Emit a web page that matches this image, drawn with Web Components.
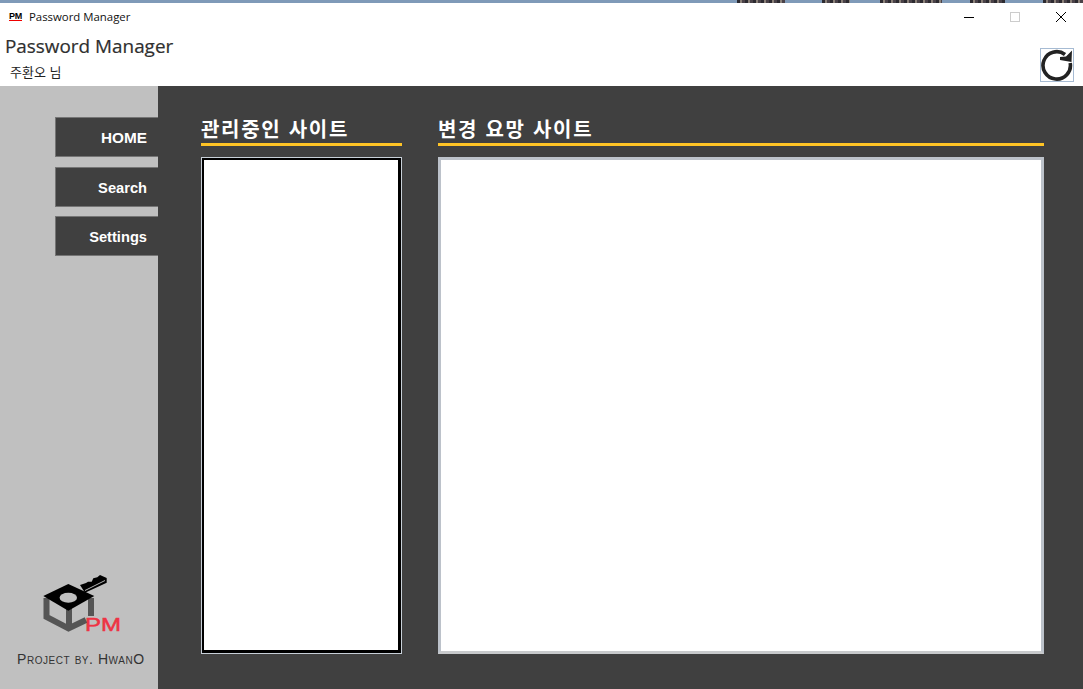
<!DOCTYPE html>
<html lang="ko">
<head>
<meta charset="utf-8">
<title>Password Manager</title>
<style>
  html, body { margin: 0; height: 100%; background: #404040; overflow: hidden; }
</style>
</head>
<body>
<pm-app></pm-app>
<script>
class DesktopStrip extends HTMLElement {
  connectedCallback() {
    this.attachShadow({ mode: "open" }).innerHTML = `
      <style>
        :host { display: flex; height: 3px; background: #7f9ab8; overflow: hidden; }
        i { display: block; height: 3px; background: repeating-linear-gradient(90deg, #2c2a30 0 3px, #8a8078 3px 5px, #4a4248 5px 8px); }
        .a { margin-left: 737px; width: 48px; }
        .b { margin-left: 37px; width: 28px; }
        .c { margin-left: 30px; width: 62px; }
        .d { margin-left: 28px; width: 35px; }
        .e { margin-left: 38px; width: 40px; }
      </style>
      <i class="a"></i><i class="b"></i><i class="c"></i><i class="d"></i><i class="e"></i>`;
  }
}

class TitleBar extends HTMLElement {
  connectedCallback() {
    this.attachShadow({ mode: "open" }).innerHTML = `
      <style>
        :host { display: flex; align-items: center; height: 28px; box-sizing: border-box; padding-bottom: 1px; background: #fff; color: #111; font: 11.4px "Open Sans", "Noto Sans", sans-serif; }
        .logo { margin-left: 9px; width: 13px; height: 8px; border-bottom: 1px solid #e00; font: bold 9px/8px "Liberation Sans", sans-serif; color: #000; letter-spacing: -.3px; }
        .name { margin-left: 7px; flex: 1; }
        .ctl { width: 46px; height: 27px; display: flex; align-items: center; justify-content: center; }
        .ctl:last-child { margin-right: -1px; }
        svg { display: block; }
      </style>
      <div class="logo">PM</div>
      <div class="name">Password Manager</div>
      <div class="ctl"><svg width="10" height="10"><path d="M0 5.5H10" stroke="#000"/></svg></div>
      <div class="ctl"><svg width="10" height="10"><rect x=".5" y=".5" width="9" height="9" fill="none" stroke="#ccc"/></svg></div>
      <div class="ctl"><svg width="10" height="10"><path d="M0 0L10 10M10 0L0 10" stroke="#000"/></svg></div>`;
  }
}

class AppHeader extends HTMLElement {
  connectedCallback() {
    this.attachShadow({ mode: "open" }).innerHTML = `
      <style>
        :host { display: flex; justify-content: space-between; height: 55px; background: #fff; }
        .left { padding-left: 5px; padding-top: 2px; }
        h1 { margin: 0; font: 400 18.9px/26px "Open Sans", "Noto Sans", sans-serif; color: #2f2f2f; -webkit-text-stroke: .2px #2f2f2f; }
        p { margin: 4px 0 0 5px; font: 13px/18px "Noto Sans CJK KR", sans-serif; color: #222; }
        button { margin: 17px 9px 0 0; width: 34px; height: 34px; padding: 0; background: #fff; border: 1px solid #a6bbd3; display: flex; align-items: center; justify-content: center; }
        svg { display: block; flex: none; }
      </style>
      <div class="left">
        <h1>Password Manager</h1>
        <p>주환오 님</p>
      </div>
      <button>
        <svg width="32" height="32" viewBox="0 0 32 32">
          <path d="M29.2 14A13.7 13.7 0 1 1 24 5.500" fill="none" stroke="#222" stroke-width="3.6"/>
          <path d="M31 1.500L30.500 13L19 11L19 8L25 7.500Z" fill="#222"/>
        </svg>
      </button>`;
  }
}

class NavButton extends HTMLElement {
  connectedCallback() {
    const margin = this.getAttribute("gap") || "0";
    const size = this.getAttribute("size") || "14.67";
    this.attachShadow({ mode: "open" }).innerHTML = `
      <style>
        :host { display: flex; align-items: center; justify-content: flex-end; box-sizing: border-box; height: 40px; margin-top: ${margin}px;
          padding: 1px 11px 0 0; background: #404040; color: #fff; border: solid #757575; border-width: 1px 0 1px 1px;
          font: bold ${size}px "Liberation Sans", Arial, sans-serif; }
      </style>
      <slot></slot>`;
  }
}

class SideBar extends HTMLElement {
  connectedCallback() {
    this.attachShadow({ mode: "open" }).innerHTML = `
      <style>
        :host { display: flex; flex-direction: column; width: 158px; background: #c0c0c0; padding: 31px 0 0 55px; box-sizing: border-box; }
        .logo { margin: auto 0 0 -55px; display: flex; flex-direction: column; }
        svg { display: block; margin-left: 40px; }
        .by { margin: 17px 0 23px 17px; font: 14px/14px "Liberation Sans", sans-serif; font-variant: small-caps; letter-spacing: .55px; color: #333; white-space: nowrap; }
      </style>
      <slot></slot>
      <div class="logo">
        <svg width="85" height="65" viewBox="40 570 85 65">
          <path d="M46.500 598V617L68.500 628.500L86 620" fill="none" stroke="#555" stroke-width="6"/>
          <path d="M69 608V628M91 598V616" fill="none" stroke="#555" stroke-width="6"/>
          <path d="M43.300 596L68.300 584L94.300 596L68.300 610.700Z" fill="#000"/>
          <ellipse cx="68.300" cy="597.700" rx="8.700" ry="5" fill="#c0c0c0"/>
          <path d="M80 585L86 583L88 581.700L91.700 581.700L93.300 578.300L97.300 577.300L100 575L106.700 578L106.700 582.700L85 592.700Z" fill="#000"/>
          <path d="M85 590.500L105 580.500" stroke="#ccc" stroke-width=".9"/>
          <text x="85" y="631" font-family="Liberation Sans" font-size="18" fill="#ee3344" stroke="#ee3344" stroke-width=".5" textLength="36" lengthAdjust="spacingAndGlyphs">PM</text>
        </svg>
        <div class="by">Project by. HwanO</div>
      </div>`;
  }
}

class SitePanel extends HTMLElement {
  connectedCallback() {
    const dark = this.hasAttribute("dark");
    this.attachShadow({ mode: "open" }).innerHTML = `
      <style>
        :host { display: flex; flex-direction: column; min-width: 0; }
        h2 { margin: 0; box-sizing: border-box; height: 30px; border-bottom: 3px solid #ffc425; color: #fff;
          font: 700 20px/26px "Noto Sans CJK KR", sans-serif; letter-spacing: 1.7px; white-space: nowrap; }
        .box { margin-top: 11px; flex: 1; background: #fff; box-sizing: border-box; }
        .dark { border: 1px solid #c8d0d8; box-shadow: inset 2px 2px 0 #000, inset -3px -3px 0 #000; }
        .light { border: 3px solid #c0c4c8; border-color: #bcc2ca #bcc2ca #c8cacc #bcc2ca; }
      </style>
      <h2><slot></slot></h2>
      <div class="box ${dark ? "dark" : "light"}"></div>`;
  }
}

class PmApp extends HTMLElement {
  connectedCallback() {
    this.attachShadow({ mode: "open" }).innerHTML = `
      <style>
        :host { display: flex; flex-direction: column; height: 689px; }
        .body { flex: 1; display: flex; min-height: 0; }
        .main { flex: 1; background: #404040; display: grid; grid-template-columns: 201px 606px; gap: 36px; padding: 30px 39px 35px 43px; }
      </style>
      <desktop-strip></desktop-strip>
      <title-bar></title-bar>
      <app-header></app-header>
      <div class="body">
        <side-bar>
          <nav-button size="15.33">HOME</nav-button>
          <nav-button gap="10">Search</nav-button>
          <nav-button gap="9">Settings</nav-button>
        </side-bar>
        <div class="main">
          <site-panel dark>관리중인 사이트</site-panel>
          <site-panel>변경 요망 사이트</site-panel>
        </div>
      </div>`;
  }
}

customElements.define("desktop-strip", DesktopStrip);
customElements.define("title-bar", TitleBar);
customElements.define("app-header", AppHeader);
customElements.define("nav-button", NavButton);
customElements.define("side-bar", SideBar);
customElements.define("site-panel", SitePanel);
customElements.define("pm-app", PmApp);
</script>
</body>
</html>
